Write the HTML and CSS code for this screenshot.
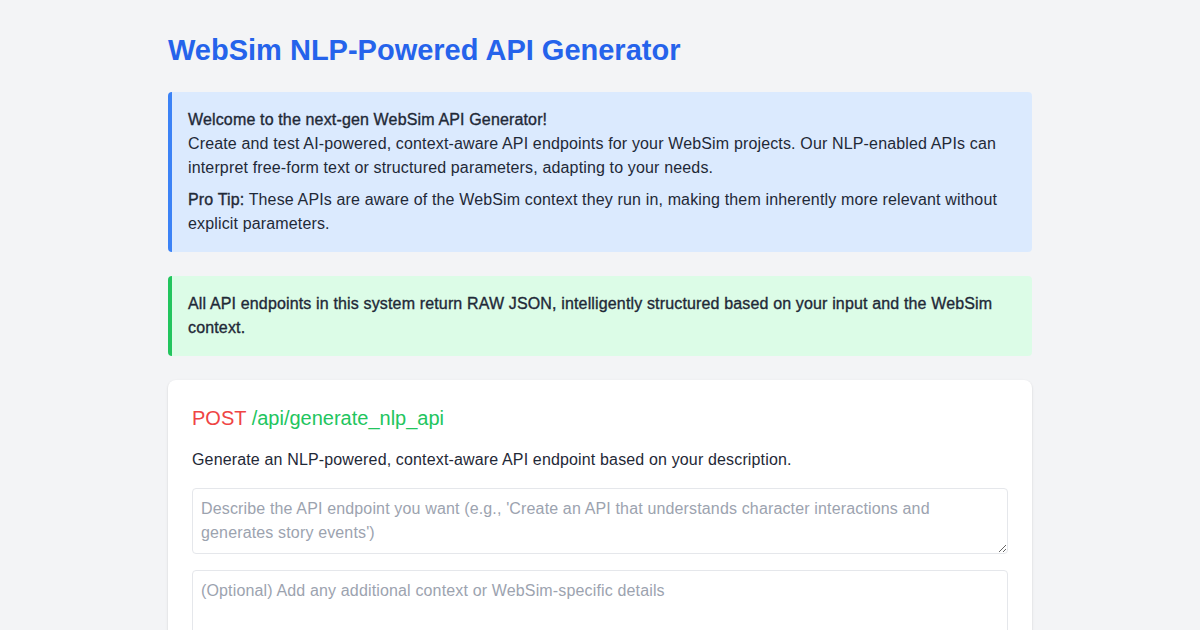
FILE: index.html
```html
<!DOCTYPE html>
<html lang="en">
<head>
<meta charset="utf-8">
<title>WebSim NLP-Powered API Generator</title>
<link rel="stylesheet" href="styles.css">
</head>
<body>
<div class="container">
  <h1 class="title">WebSim NLP-Powered API Generator</h1>

  <div class="note note-info">
    <p><strong class="semi">Welcome to the next-gen WebSim API Generator!</strong><br>
    Create and test AI-powered, context-aware API endpoints for your WebSim projects. Our NLP-enabled APIs can interpret free-form text or structured parameters, adapting to your needs.</p>
    <p><strong class="semi">Pro Tip:</strong> These APIs are aware of the WebSim context they run in, making them inherently more relevant without explicit parameters.</p>
  </div>

  <div class="note note-success">
    <p class="semi">All API endpoints in this system return RAW JSON, intelligently structured based on your input and the WebSim context.</p>
  </div>

  <div class="card">
    <h2 class="endpoint"><span class="method">POST</span> <span class="path">/api/generate_nlp_api</span></h2>
    <p class="desc">Generate an NLP-powered, context-aware API endpoint based on your description.</p>
    <textarea class="field" rows="2" placeholder="Describe the API endpoint you want (e.g., 'Create an API that understands character interactions and generates story events')"></textarea>
    <textarea class="field" rows="3" placeholder="(Optional) Add any additional context or WebSim-specific details"></textarea>
  </div>
</div>
</body>
</html>
```

FILE: styles.css
```css
* { box-sizing: border-box; }
html, body { margin: 0; padding: 0; }
body {
  background: #f3f4f6;
  font-family: "Liberation Sans", Arial, sans-serif;
  color: #1f2937;
  font-size: 16px;
  line-height: 24px;
  letter-spacing: 0.15px;
}
.container {
  max-width: 896px;
  margin: 0 auto;
  padding: 32px 16px;
}
.title {
  font-size: 29px;
  line-height: 36px;
  font-weight: 700;
  letter-spacing: 0;
  color: #2563eb;
  margin: 0 0 24px;
}
.note {
  border-left: 4px solid;
  border-radius: 4px;
  padding: 16px;
  margin-bottom: 24px;
}
.note p { margin: 0 0 8px; }
.note p:last-child { margin-bottom: 0; }
.note-info {
  background: #dbeafe;
  border-color: #3b82f6;
}
.note-success {
  background: #dcfce7;
  border-color: #22c55e;
}
.semi {
  font-weight: 400;
  -webkit-text-stroke: 0.35px currentColor;
}
.card {
  background: #ffffff;
  border-radius: 8px;
  box-shadow: 0 1px 3px rgba(0,0,0,0.1), 0 1px 2px rgba(0,0,0,0.06);
  padding: 24px;
}
.endpoint {
  font-size: 20px;
  line-height: 28px;
  font-weight: 400;
  letter-spacing: 0;
  margin: 0 0 16px;
}
.method { color: #ef4444; }
.path { color: #22c55e; }
.desc { margin: 0 0 16px; }
.field {
  display: block;
  width: 100%;
  font-family: "Liberation Sans", Arial, sans-serif;
  font-size: 16px;
  line-height: 24px;
  letter-spacing: 0.15px;
  padding: 8px;
  border: 1px solid #e5e7eb;
  border-radius: 4px;
  color: #1f2937;
  margin-bottom: 16px;
  background: #fff;
}
.field::placeholder { color: #9ca3af; }
```
